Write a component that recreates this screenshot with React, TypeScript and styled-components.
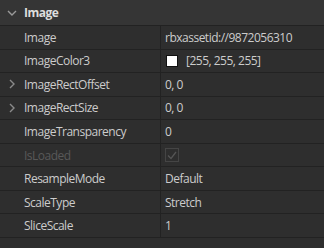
import React from "react";
import styled, { createGlobalStyle } from "styled-components";

const GlobalStyle = createGlobalStyle`
  html, body {
    margin: 0;
    padding: 0;
    background: #2e2e2e;
  }
  body {
    font-family: "Open Sans", "Noto Sans", sans-serif;
    font-size: 12px;
    letter-spacing: -0.5px;
    color: #cccccc;
  }
`;

const Panel = styled.div`
  width: 324px;
  height: 248px;
  background: #2e2e2e;
  overflow: hidden;
`;

const Header = styled.div`
  display: flex;
  align-items: center;
  height: 25px;
  background: #353535;
  border-bottom: 1px solid #222222;
  font-weight: bold;
  color: #dddddd;
`;

const ChevronBox = styled.div`
  width: 24px;
  height: 100%;
  display: flex;
  align-items: center;
  justify-content: center;
`;

const Row = styled.div`
  display: grid;
  grid-template-columns: 161px 1fr;
  height: 23.55px;
  box-sizing: border-box;
  border-bottom: 1px solid #222222;
`;

const NameCell = styled.div<{ $disabled?: boolean }>`
  display: flex;
  align-items: center;
  border-right: 1px solid #222222;
  color: ${(p) => (p.$disabled ? "#595959" : "#cccccc")};
`;

const ValueCell = styled.div`
  display: flex;
  align-items: center;
  padding-left: 4px;
  gap: 8px;
  white-space: nowrap;
`;

const Swatch = styled.div`
  width: 10px;
  height: 10px;
  background: #ffffff;
  border: 1px solid #111111;
  margin-left: 1px;
`;

const Check = styled.div`
  width: 12px;
  height: 12px;
  border: 1px solid #454545;
  display: flex;
  align-items: center;
  justify-content: center;
`;

const ChevronDown = () => (
  <svg width="10" height="6" viewBox="0 0 10 6">
    <path d="M1 1 L5 5 L9 1" stroke="#9a9a9a" strokeWidth="1.4" fill="none" />
  </svg>
);

const ChevronRight = () => (
  <svg width="6" height="10" viewBox="0 0 6 10">
    <path d="M1 1 L5 5 L1 9" stroke="#8a8a8a" strokeWidth="1.4" fill="none" />
  </svg>
);

type Prop = {
  name: string;
  value?: string;
  expand?: boolean;
  color?: boolean;
  check?: boolean;
  disabled?: boolean;
};

const props: Prop[] = [
  { name: "Image", value: "rbxassetid://9872056310" },
  { name: "ImageColor3", value: "[255, 255, 255]", color: true },
  { name: "ImageRectOffset", value: "0, 0", expand: true },
  { name: "ImageRectSize", value: "0, 0", expand: true },
  { name: "ImageTransparency", value: "0" },
  { name: "IsLoaded", check: true, disabled: true },
  { name: "ResampleMode", value: "Default" },
  { name: "ScaleType", value: "Stretch" },
  { name: "SliceScale", value: "1" },
];

const App = () => {
  return (
    <Panel>
      <GlobalStyle />
      <Header>
        <ChevronBox>
          <ChevronDown />
        </ChevronBox>
        Image
      </Header>
      {props.map((p) => (
        <Row key={p.name}>
          <NameCell $disabled={p.disabled}>
            <ChevronBox>{p.expand && <ChevronRight />}</ChevronBox>
            {p.name}
          </NameCell>
          <ValueCell>
            {p.color && <Swatch />}
            {p.check && (
              <Check>
                <svg width="10" height="9" viewBox="0 0 10 9">
                  <path d="M1 4.5 L4 7.5 L9 1" stroke="#555555" strokeWidth="1.3" fill="none" />
                </svg>
              </Check>
            )}
            {p.value}
          </ValueCell>
        </Row>
      ))}
    </Panel>
  );
};

export default App;
